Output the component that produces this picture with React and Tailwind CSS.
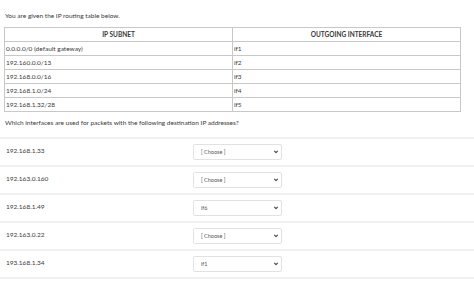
const routes = [
  ['0.0.0.0/0 (default gateway)', 'if1'],
  ['192.160.0.0/13', 'if2'],
  ['192.168.0.0/16', 'if3'],
  ['192.168.1.0/24', 'if4'],
  ['192.168.1.32/28', 'if5'],
];

const questions = [
  ['192.168.1.33', '[ Choose ]'],
  ['192.163.0.160', '[ Choose ]'],
  ['192.168.1.49', 'if6'],
  ['192.163.0.22', '[ Choose ]'],
  ['193.168.1.34', 'if1'],
];

function Chevron() {
  return (
    <svg width="6" height="6" viewBox="0 0 10 10" className="text-[#444]">
      <path d="M2.5 3.5l2.5 2.5 2.5-2.5" fill="none" stroke="currentColor" strokeWidth="1.8" strokeLinecap="round" strokeLinejoin="round" />
    </svg>
  );
}

export default function App() {
  return (
    <div className="w-[474px] h-[283px] overflow-hidden bg-white text-[#3a3a3a] font-['Lato','Liberation_Sans',sans-serif]">
      <p className="pl-[5px] pt-[11px] text-[6.5px] leading-[10px]">You are given the IP routing table below.</p>

      <table className="ml-[4px] mt-[6px] w-[457px] border-collapse border border-[#a8a8a8] text-[6.5px] leading-[8px]">
        <thead>
          <tr>
            <th className="h-[14px] w-[228px] border border-[#c8c8c8] font-bold">IP SUBNET</th>
            <th className="h-[14px] border border-[#c8c8c8] font-bold">OUTGOING INTERFACE</th>
          </tr>
        </thead>
        <tbody>
          {routes.map(([subnet, iface]) => (
            <tr key={subnet}>
              <td className="h-[14px] border border-[#c8c8c8] pl-[1px]">{subnet}</td>
              <td className="h-[14px] border border-[#c8c8c8] pl-[1px]">{iface}</td>
            </tr>
          ))}
        </tbody>
      </table>

      <p className="pl-[5px] pt-[6px] text-[6.5px] leading-[10px]">
        Which interfaces are used for packets with the following destination IP addresses?
      </p>

      <div className="mt-[9px] border-t-2 border-[#f0f0f0]">
        {questions.map(([ip, choice]) => (
          <div key={ip} className="flex h-[28px] items-center border-b-2 border-[#f0f0f0]">
            <span className="w-[193px] pl-[6px] pb-[3px] text-[6.5px]">{ip}</span>
            <div className="flex h-[16px] w-[89px] items-center justify-between rounded-[2px] border border-[#e2e2e2] pl-[7px] pr-[2px] text-[5.5px] text-[#555]">
              <span>{choice}</span>
              <Chevron />
            </div>
          </div>
        ))}
      </div>
    </div>
  );
}
